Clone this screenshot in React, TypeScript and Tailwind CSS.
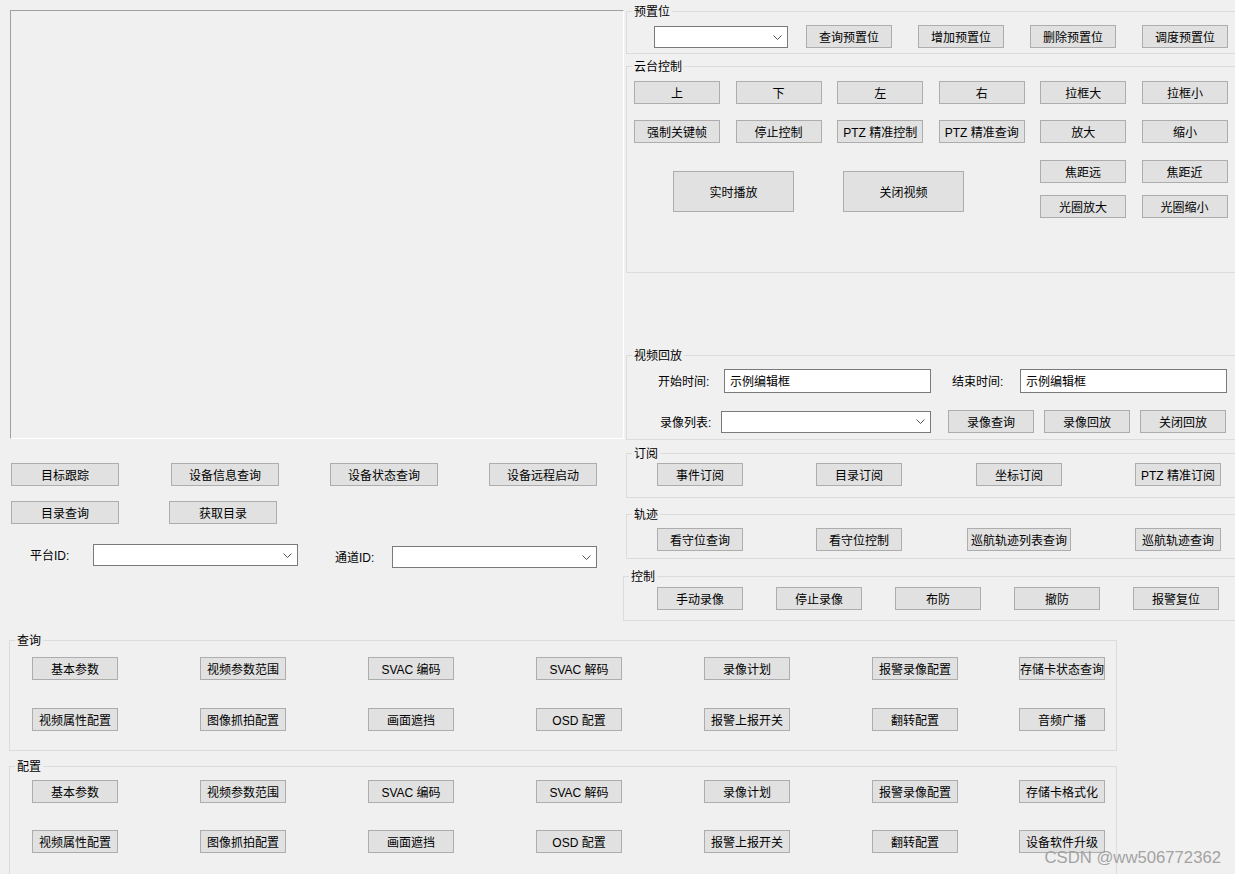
import type { ReactNode } from "react";
import { twMerge } from "tailwind-merge";

function Btn({ children, className = "" }: { children: ReactNode; className?: string }) {
  return (
    <button
      type="button"
      className={twMerge(
        "flex h-[23px] w-[86px] shrink-0 items-center justify-center whitespace-nowrap border border-[#adadad] bg-[#e1e1e1] pt-[3px] text-[12px] leading-none text-black",
        className,
      )}
    >
      {children}
    </button>
  );
}

function Combo({ className = "" }: { className?: string }) {
  return (
    <div
      className={twMerge(
        "flex h-[22px] shrink-0 items-center justify-end border border-[#7a7a7a] bg-white pr-[5px]",
        className,
      )}
    >
      <svg width="9" height="5" viewBox="0 0 9 5">
        <polyline points="0.5,0.5 4.5,4.5 8.5,0.5" fill="none" stroke="#505050" strokeWidth="1" />
      </svg>
    </div>
  );
}

function Edit({ className = "", value }: { className?: string; value: string }) {
  return (
    <div
      className={twMerge(
        "flex h-[24px] shrink-0 items-center border border-[#7a7a7a] bg-white pl-[5px] pt-[2px] text-[12px] leading-none",
        className,
      )}
    >
      {value}
    </div>
  );
}

function Label({ children, className = "" }: { children: ReactNode; className?: string }) {
  return <span className={twMerge("relative top-[1px] shrink-0 whitespace-nowrap", className)}>{children}</span>;
}

function Group({
  title,
  className = "",
  children,
}: {
  title: string;
  className?: string;
  children: ReactNode;
}) {
  return (
    <div className={twMerge("relative shrink-0 border border-[#dcdcdc]", className)}>
      <span className="absolute -top-[7px] left-[5px] bg-[#f0f0f0] px-[2px] text-[12px] leading-[14px]">
        {title}
      </span>
      {children}
    </div>
  );
}

const queryRows = [
  ["基本参数", "视频参数范围", "SVAC 编码", "SVAC 解码", "录像计划", "报警录像配置", "存储卡状态查询"],
  ["视频属性配置", "图像抓拍配置", "画面遮挡", "OSD 配置", "报警上报开关", "翻转配置", "音频广播"],
];

const configRows = [
  ["基本参数", "视频参数范围", "SVAC 编码", "SVAC 解码", "录像计划", "报警录像配置", "存储卡格式化"],
  ["视频属性配置", "图像抓拍配置", "画面遮挡", "OSD 配置", "报警上报开关", "翻转配置", "设备软件升级"],
];

function ButtonRow({ items }: { items: string[] }) {
  return (
    <div className="flex pl-[22px]">
      {items.map((label, i) => (
        <Btn key={label} className={i === 0 ? "" : i === 6 ? "ml-[61px]" : "ml-[82px]"}>
          {label}
        </Btn>
      ))}
    </div>
  );
}

const ptzButtons = [
  "上",
  "下",
  "左",
  "右",
  "拉框大",
  "拉框小",
  "强制关键帧",
  "停止控制",
  "PTZ 精准控制",
  "PTZ 精准查询",
  "放大",
  "缩小",
];

export default function App() {
  return (
    <div className="relative h-[874px] w-[1235px] overflow-hidden bg-[#f0f0f0] font-['Liberation_Sans','Noto_Sans_CJK_SC',sans-serif] text-[12px] text-black">
      <div className="flex h-[627px]">
        {/* left: video + device buttons */}
        <div className="flex w-[623px] shrink-0 flex-col">
          <div className="ml-[10px] mt-[10px] h-[429px] w-[614px] border border-b-white border-l-[#a0a0a0] border-r-white border-t-[#a0a0a0]" />
          <div className="mt-[24px] flex">
            <Btn className="ml-[11px] w-[108px]">目标跟踪</Btn>
            <Btn className="ml-[52px] w-[108px]">设备信息查询</Btn>
            <Btn className="ml-[51px] w-[108px]">设备状态查询</Btn>
            <Btn className="ml-[51px] w-[108px]">设备远程启动</Btn>
          </div>
          <div className="mt-[15px] flex">
            <Btn className="ml-[11px] w-[108px]">目录查询</Btn>
            <Btn className="ml-[50px] w-[108px]">获取目录</Btn>
          </div>
          <div className="mt-[20px] flex items-start">
            <div className="flex items-center">
              <Label className="ml-[30px] w-[63px]">平台ID:</Label>
              <Combo className="w-[205px]" />
            </div>
            <div className="mt-[2px] flex items-center">
              <Label className="ml-[37px] w-[57px]">通道ID:</Label>
              <Combo className="w-[205px]" />
            </div>
          </div>
        </div>

        {/* right: control groups */}
        <div className="flex flex-1 flex-col">
          <Group title="预置位" className="ml-[3px] mt-[11px] h-[43px] border-r-0">
            <div className="flex items-start pl-[27px] pt-[13px]">
              <Combo className="mt-[1px] w-[134px]" />
              <Btn className="ml-[18px]">查询预置位</Btn>
              <Btn className="ml-[26px]">增加预置位</Btn>
              <Btn className="ml-[26px]">删除预置位</Btn>
              <Btn className="ml-[26px]">调度预置位</Btn>
            </div>
          </Group>

          <Group title="云台控制" className="ml-[3px] mt-[12px] h-[207px] border-r-0">
            <div className="pl-[7px] pt-[14px]">
              <div className="grid grid-cols-[repeat(6,86px)] gap-x-[15.6px] gap-y-[16px]">
                {ptzButtons.map((b) => (
                  <Btn key={b}>{b}</Btn>
                ))}
              </div>
              <div className="mt-[17px] flex">
                <div className="flex w-[406px] items-start pl-[39px] pt-[11px]">
                  <Btn className="h-[41px] w-[121px]">实时播放</Btn>
                  <Btn className="ml-[49px] h-[41px] w-[121px]">关闭视频</Btn>
                </div>
                <div className="grid grid-cols-[repeat(2,86px)] gap-x-[15.6px] gap-y-[12px]">
                  <Btn>焦距远</Btn>
                  <Btn>焦距近</Btn>
                  <Btn>光圈放大</Btn>
                  <Btn>光圈缩小</Btn>
                </div>
              </div>
            </div>
          </Group>

          <Group title="视频回放" className="ml-[3px] mt-[82px] h-[85px] border-r-0">
            <div className="mt-[13px] flex h-[24px] items-center">
              <Label className="ml-[31px] w-[66px]">开始时间:</Label>
              <Edit className="w-[207px]" value="示例编辑框" />
              <Label className="ml-[21px] w-[68px]">结束时间:</Label>
              <Edit className="w-[207px]" value="示例编辑框" />
            </div>
            <div className="mt-[17px] flex h-[23px] items-center">
              <Label className="ml-[33px] w-[61px]">录像列表:</Label>
              <Combo className="w-[210px]" />
              <Btn className="ml-[17px]">录像查询</Btn>
              <Btn className="ml-[10px]">录像回放</Btn>
              <Btn className="ml-[10px]">关闭回放</Btn>
            </div>
          </Group>

          <Group title="订阅" className="ml-[3px] mt-[13px] h-[45px] border-r-0">
            <div className="flex pl-[30px] pt-[9px]">
              <Btn>事件订阅</Btn>
              <Btn className="ml-[73px]">目录订阅</Btn>
              <Btn className="ml-[74px]">坐标订阅</Btn>
              <Btn className="ml-[73px]">PTZ 精准订阅</Btn>
            </div>
          </Group>

          <Group title="轨迹" className="ml-[3px] mt-[16px] h-[45px] border-r-0">
            <div className="flex pl-[30px] pt-[13px]">
              <Btn>看守位查询</Btn>
              <Btn className="ml-[73px]">看守位控制</Btn>
              <Btn className="ml-[65px] w-[104px]">巡航轨迹列表查询</Btn>
              <Btn className="ml-[64px]">巡航轨迹查询</Btn>
            </div>
          </Group>

          <Group title="控制" className="mt-[17px] h-[45px] border-r-0">
            <div className="flex gap-[33px] pl-[33px] pt-[10px]">
              <Btn>手动录像</Btn>
              <Btn>停止录像</Btn>
              <Btn>布防</Btn>
              <Btn>撤防</Btn>
              <Btn>报警复位</Btn>
            </div>
          </Group>
        </div>
      </div>

      <Group title="查询" className="ml-[9px] mt-[13px] h-[111px] w-[1108px]">
        <div className="flex flex-col gap-[28px] pt-[16px]">
          {queryRows.map((row, i) => (
            <ButtonRow key={i} items={row} />
          ))}
        </div>
      </Group>

      <Group title="配置" className="ml-[9px] mt-[15px] h-[120px] w-[1108px]">
        <div className="flex flex-col gap-[27px] pt-[13px]">
          {configRows.map((row, i) => (
            <ButtonRow key={i} items={row} />
          ))}
        </div>
      </Group>

      <span className="absolute bottom-[7px] right-[14px] text-[16.7px] leading-none text-[#a3a3a3]">
        CSDN @ww506772362
      </span>
    </div>
  );
}
